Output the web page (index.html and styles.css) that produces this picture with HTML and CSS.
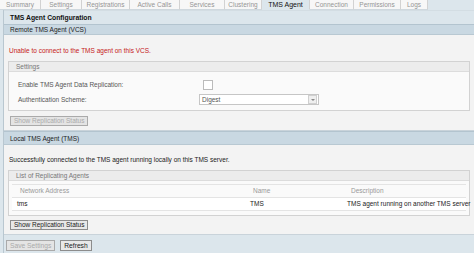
FILE: index.html
```html
<!DOCTYPE html>
<html>
<head>
<meta charset="utf-8">
<link rel="stylesheet" href="styles.css">
</head>
<body>
<div class="tabs">
  <div class="tab">Summary</div>
  <div class="tab">Settings</div>
  <div class="tab">Registrations</div>
  <div class="tab">Active Calls</div>
  <div class="tab">Services</div>
  <div class="tab">Clustering</div>
  <div class="tab active">TMS Agent</div>
  <div class="tab">Connection</div>
  <div class="tab">Permissions</div>
  <div class="tab">Logs</div>
</div>
<div class="frame">
  <div class="title">TMS Agent Configuration</div>
  <div class="section-bar first">Remote TMS Agent (VCS)</div>
  <div class="section-body">
    <div class="msg error">Unable to connect to the TMS agent on this VCS.</div>
    <div class="fieldset settings">
      <div class="fs-head">Settings</div>
      <div class="fs-body">
        <div class="row">
          <div class="label">Enable TMS Agent Data Replication:</div>
          <div class="check"></div>
        </div>
        <div class="row">
          <div class="label">Authentication Scheme:</div>
          <div class="select"><span class="sel-text">Digest</span><span class="sel-btn"><span class="arrow"></span></span></div>
        </div>
      </div>
    </div>
    <div class="btn disabled">Show Replication Status</div>
  </div>
  <div class="section-bar second">Local TMS Agent (TMS)</div>
  <div class="section-body">
    <div class="msg ok">Successfully connected to the TMS agent running locally on this TMS server.</div>
    <div class="fieldset agents">
      <div class="fs-head">List of Replicating Agents</div>
      <div class="table">
        <div class="trow thead">
          <div class="c1">Network Address</div>
          <div class="c2">Name</div>
          <div class="c3">Description</div>
        </div>
        <div class="trow tbody">
          <div class="c1">tms</div>
          <div class="c2">TMS</div>
          <div class="c3">TMS agent running on another TMS server</div>
        </div>
      </div>
    </div>
    <div class="btn">Show Replication Status</div>
  </div>
  <div class="footer">
    <div class="btn disabled">Save Settings</div>
    <div class="btn">Refresh</div>
  </div>
</div>
</body>
</html>
```

FILE: styles.css
```css
html, body {
  margin: 0;
  padding: 0;
}
body {
  width: 474px;
  height: 253px;
  overflow: hidden;
  background: #dce6ec;
  font-family: "Liberation Sans", Arial, sans-serif;
  font-size: 6.5px;
  color: #222;
  white-space: nowrap;
}
.tabs {
  display: flex;
  height: 10px;
  background: #fff;
  width: 428px;
}
.tab {
  line-height: 10px;
  color: #959595;
  background: #f7f7f7;
  border-right: 1px solid #d2d2d2;
  border-bottom: 1px solid #cfd8de;
  box-sizing: border-box;
  height: 10px;
  text-align: center;
}
.tab:nth-child(1) { width: 41px; }
.tab:nth-child(2) { width: 41px; }
.tab:nth-child(3) { width: 48px; }
.tab:nth-child(4) { width: 50px; }
.tab:nth-child(5) { width: 45px; }
.tab:nth-child(6) { width: 37px; }
.tab:nth-child(7) { width: 48px; }
.tab:nth-child(8) { width: 44px; }
.tab:nth-child(9) { width: 47px; }
.tab:nth-child(10) { width: 27px; }
.tab.active {
  background: #dce6ec;
  color: #111;
  font-size: 7px;
  border-bottom-color: #dce6ec;
}
.frame {
  margin-left: 3px;
  border-left: 1px solid #b9c7d0;
  background: #dce6ec;
}
.title {
  height: 14px;
  line-height: 14px;
  padding-left: 6px;
  font-weight: bold;
  font-size: 6.8px;
  color: #111;
  background: #dce6ec;
  border-top: 1px solid #d3dde3;
  box-sizing: border-box;
}
.section-bar {
  padding-left: 6px;
  background: #c9d8e2;
  border-top: 1px solid #b3c4cf;
  border-bottom: 1px solid #b8c8d2;
  color: #222;
  box-sizing: border-box;
}
.section-bar.first {
  height: 11px;
  line-height: 10px;
}
.section-bar.second {
  height: 14px;
  line-height: 13px;
}
.section-body {
  background: #f3f3f3;
  padding: 0 4px 4px 4px;
  border-bottom: 1px solid #c9d3da;
}
.msg {
  padding-left: 1px;
}
.msg.error {
  color: #c62020;
  padding-top: 12px;
  height: 14px;
}
.msg.ok {
  color: #222;
  padding-top: 11px;
  height: 14px;
}
.fieldset {
  border: 1px solid #d2d2d2;
  background: #fafafa;
}
.fs-head {
  height: 9px;
  line-height: 9px;
  padding-left: 7px;
  background: #ececec;
  border-bottom: 1px solid #dcdcdc;
  color: #777;
}
.fs-body {
  padding: 5px 0 3px 9px;
}
.row {
  display: flex;
  align-items: center;
  height: 15px;
}
.label {
  width: 181px;
  color: #555;
}
.check {
  width: 8px;
  height: 8px;
  border: 1px solid #bbb;
  background: #fff;
  margin-left: 4px;
}
.select {
  display: flex;
  align-items: center;
  width: 120px;
  height: 11px;
  border: 1px solid #c6c6c6;
  background: #fff;
  box-sizing: border-box;
}
.sel-text {
  flex: 1;
  padding-left: 2px;
  color: #555;
}
.sel-btn {
  width: 9px;
  height: 9px;
  margin-right: 1px;
  border: 1px solid #d0d0d0;
  background: #efefef;
  box-sizing: border-box;
  display: flex;
  align-items: center;
  justify-content: center;
}
.arrow {
  width: 0;
  height: 0;
  border-left: 2px solid transparent;
  border-right: 2px solid transparent;
  border-top: 2px solid #888;
}
.btn {
  display: inline-block;
  height: 10px;
  line-height: 8px;
  padding: 0 3px;
  border: 1px solid #8c8c8c;
  background: #e8e8e8;
  color: #222;
  box-sizing: border-box;
  margin-top: 5px;
  margin-left: 2px;
  vertical-align: top;
}
.agents + .btn {
  margin-top: 4px;
}
.btn.disabled {
  color: #aaa;
  border-color: #aaa;
  background: #e4e4e4;
}
.agents .table {
  margin: 3px 3px 4px 3px;
  background: #fff;
  border-top: 1px solid #e4e4e4;
}
.trow {
  display: flex;
  height: 12px;
  line-height: 12px;
}
.thead {
  color: #999;
  background: #fafafa;
  border-bottom: 1px solid #e4e4e4;
  padding-left: 8px;
}
.tbody {
  background: #fff;
  border-bottom: 1px solid #e4e4e4;
  padding-left: 5px;
}
.c1 { width: 233px; flex-shrink: 0; }
.c2 { width: 98px; flex-shrink: 0; }
.tbody .c2 { width: 97px; }
.c3 { flex: 1; min-width: 0; }
.footer {
  height: 18px;
  display: flex;
  align-items: flex-start;
  padding-top: 5px;
  box-sizing: border-box;
  gap: 3px;
  background: #dce6ec;
}
.footer .btn {
  margin-top: 0;
  height: 11px;
  line-height: 9px;
  font-size: 6.7px;
}
```
